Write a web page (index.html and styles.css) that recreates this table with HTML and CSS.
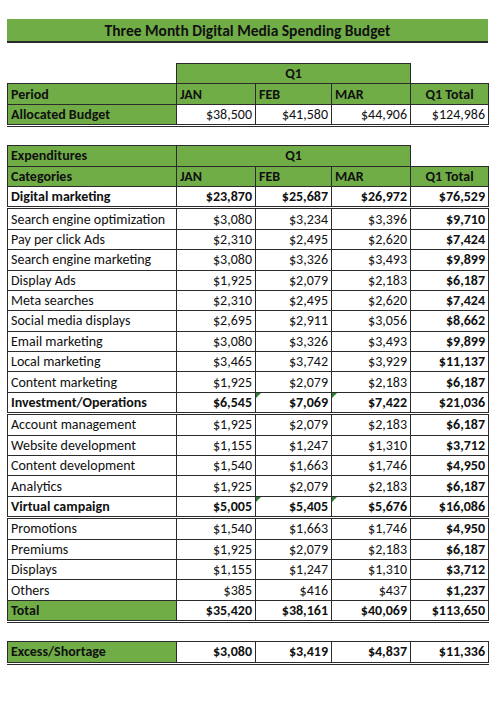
FILE: index.html
```html
<!DOCTYPE html>
<html lang="en">
<head>
    <meta charset="UTF-8">
    <meta name="viewport" content="width=device-width, initial-scale=1.0">
    <title>Three Month Digital Media Spending Budget</title>
    <link rel="stylesheet" href="styles.css">
</head>
<body>

    <div class="sheet">
        <div class="title">Three Month Digital Media Spending Budget</div>

        <!-- Budget per period -->
        <table class="grid period">
            <colgroup>
                <col class="c-label"><col class="c-jan"><col class="c-feb"><col class="c-mar"><col class="c-total">
            </colgroup>
            <tr class="quarter">
                <td class="blank"></td>
                <td colspan="3" class="head center">Q1</td>
                <td class="blank"></td>
            </tr>
            <tr class="head-row">
                <td class="head">Period</td>
                <td class="head">JAN</td>
                <td class="head">FEB</td>
                <td class="head">MAR</td>
                <td class="head center">Q1 Total</td>
            </tr>
            <tr class="last">
                <td class="head">Allocated Budget</td>
                <td class="num">$38,500</td>
                <td class="num">$41,580</td>
                <td class="num">$44,906</td>
                <td class="num">$124,986</td>
            </tr>
        </table>

        <!-- Expenditures -->
        <table class="grid spend">
            <colgroup>
                <col class="c-label"><col class="c-jan"><col class="c-feb"><col class="c-mar"><col class="c-total">
            </colgroup>
            <tr class="quarter">
                <td class="head">Expenditures</td>
                <td colspan="3" class="head center">Q1</td>
                <td class="blank"></td>
            </tr>
            <tr class="head-row">
                <td class="head">Categories</td>
                <td class="head">JAN</td>
                <td class="head">FEB</td>
                <td class="head">MAR</td>
                <td class="head center">Q1 Total</td>
            </tr>

            <tr class="group">
                <td>Digital marketing</td>
                <td class="num">$23,870</td><td class="num">$25,687</td><td class="num">$26,972</td><td class="num">$76,529</td>
            </tr>
            <tr><td>Search engine optimization</td><td class="num">$3,080</td><td class="num">$3,234</td><td class="num">$3,396</td><td class="num sum">$9,710</td></tr>
            <tr><td>Pay per click Ads</td><td class="num">$2,310</td><td class="num">$2,495</td><td class="num">$2,620</td><td class="num sum">$7,424</td></tr>
            <tr><td>Search engine marketing</td><td class="num">$3,080</td><td class="num">$3,326</td><td class="num">$3,493</td><td class="num sum">$9,899</td></tr>
            <tr><td>Display Ads</td><td class="num">$1,925</td><td class="num">$2,079</td><td class="num">$2,183</td><td class="num sum">$6,187</td></tr>
            <tr><td>Meta searches</td><td class="num">$2,310</td><td class="num">$2,495</td><td class="num">$2,620</td><td class="num sum">$7,424</td></tr>
            <tr><td>Social media displays</td><td class="num">$2,695</td><td class="num">$2,911</td><td class="num">$3,056</td><td class="num sum">$8,662</td></tr>
            <tr><td>Email marketing</td><td class="num">$3,080</td><td class="num">$3,326</td><td class="num">$3,493</td><td class="num sum">$9,899</td></tr>
            <tr><td>Local marketing</td><td class="num">$3,465</td><td class="num">$3,742</td><td class="num">$3,929</td><td class="num sum">$11,137</td></tr>
            <tr><td>Content marketing</td><td class="num">$1,925</td><td class="num">$2,079</td><td class="num">$2,183</td><td class="num sum">$6,187</td></tr>

            <tr class="group">
                <td>Investment/Operations</td>
                <td class="num">$6,545</td><td class="num flag">$7,069</td><td class="num flag">$7,422</td><td class="num">$21,036</td>
            </tr>
            <tr><td>Account management</td><td class="num">$1,925</td><td class="num">$2,079</td><td class="num">$2,183</td><td class="num sum">$6,187</td></tr>
            <tr><td>Website development</td><td class="num">$1,155</td><td class="num">$1,247</td><td class="num">$1,310</td><td class="num sum">$3,712</td></tr>
            <tr><td>Content development</td><td class="num">$1,540</td><td class="num">$1,663</td><td class="num">$1,746</td><td class="num sum">$4,950</td></tr>
            <tr><td>Analytics</td><td class="num">$1,925</td><td class="num">$2,079</td><td class="num">$2,183</td><td class="num sum">$6,187</td></tr>

            <tr class="group">
                <td>Virtual campaign</td>
                <td class="num">$5,005</td><td class="num flag">$5,405</td><td class="num flag">$5,676</td><td class="num">$16,086</td>
            </tr>
            <tr><td>Promotions</td><td class="num">$1,540</td><td class="num">$1,663</td><td class="num">$1,746</td><td class="num sum">$4,950</td></tr>
            <tr><td>Premiums</td><td class="num">$1,925</td><td class="num">$2,079</td><td class="num">$2,183</td><td class="num sum">$6,187</td></tr>
            <tr><td>Displays</td><td class="num">$1,155</td><td class="num">$1,247</td><td class="num">$1,310</td><td class="num sum">$3,712</td></tr>
            <tr><td>Others</td><td class="num">$385</td><td class="num">$416</td><td class="num">$437</td><td class="num sum">$1,237</td></tr>

            <tr class="group last">
                <td class="head">Total</td>
                <td class="num">$35,420</td><td class="num">$38,161</td><td class="num">$40,069</td><td class="num">$113,650</td>
            </tr>
        </table>

        <!-- Differenz zum Budget -->
        <table class="grid excess">
            <colgroup>
                <col class="c-label"><col class="c-jan"><col class="c-feb"><col class="c-mar"><col class="c-total">
            </colgroup>
            <tr class="group last">
                <td class="head">Excess/Shortage</td>
                <td class="num">$3,080</td><td class="num">$3,419</td><td class="num">$4,837</td><td class="num">$11,336</td>
            </tr>
        </table>
    </div>

</body>
</html>
```

FILE: styles.css
```css
body {
    margin: 0;
    background-color: #ffffff;
    font-family: 'Carlito', 'Lato', sans-serif;
    font-size: 14px;
    color: #111111;
}

.sheet {
    padding: 19px 10px 0 7px;
}

.title {
    height: 22px;
    line-height: 23px;
    background-color: #70ad47;
    border-bottom: 2px solid #2b2b2b;
    text-align: center;
    font-weight: bold;
    font-size: 15.5px;
    color: #111111;
}

.grid {
    border-collapse: collapse;
    table-layout: fixed;
    width: 481px;
}

.period { margin-top: 20px; }
.spend { margin-top: 18px; }
.excess { margin-top: 18px; }

.c-label { width: 169px; }
.c-jan { width: 79px; }
.c-feb { width: 76px; }
.c-mar { width: 79px; }
.c-total { width: 78px; }

.grid td {
    height: 19.4px;
    padding: 0 3px;
    line-height: 19px;
    white-space: nowrap;
    border-top: 1px solid #2b2b2b;
    border-left: 1px solid #2b2b2b;
    border-right: 1px solid #2b2b2b;
    position: relative;
}

/* innere Spaltenlinien etwas heller */
.grid td + td + td {
    border-left-color: #8a8a8a;
}

.grid td.num:last-child {
    border-left-color: #2b2b2b;
}

.grid td.head {
    background-color: #70ad47;
    font-weight: bold;
    border-left-color: #2b2b2b;
}

.grid td.blank {
    border: none;
}

.grid .quarter td.blank:last-child {
    border-left: 1px solid #2b2b2b;
    border-bottom: 1px solid #2b2b2b;
}

.center {
    text-align: center;
}

.num {
    text-align: right;
}

.sum {
    font-weight: bold;
}

.group td {
    font-weight: bold;
    border-bottom: 3px double #2b2b2b;
}

.last td {
    border-bottom: 3px double #2b2b2b;
}

/* kleine gruene Ecke wie in Excel */
.flag::before {
    content: "";
    position: absolute;
    top: 0;
    left: 0;
    border-top: 5px solid #2e7d32;
    border-right: 5px solid transparent;
}
```
